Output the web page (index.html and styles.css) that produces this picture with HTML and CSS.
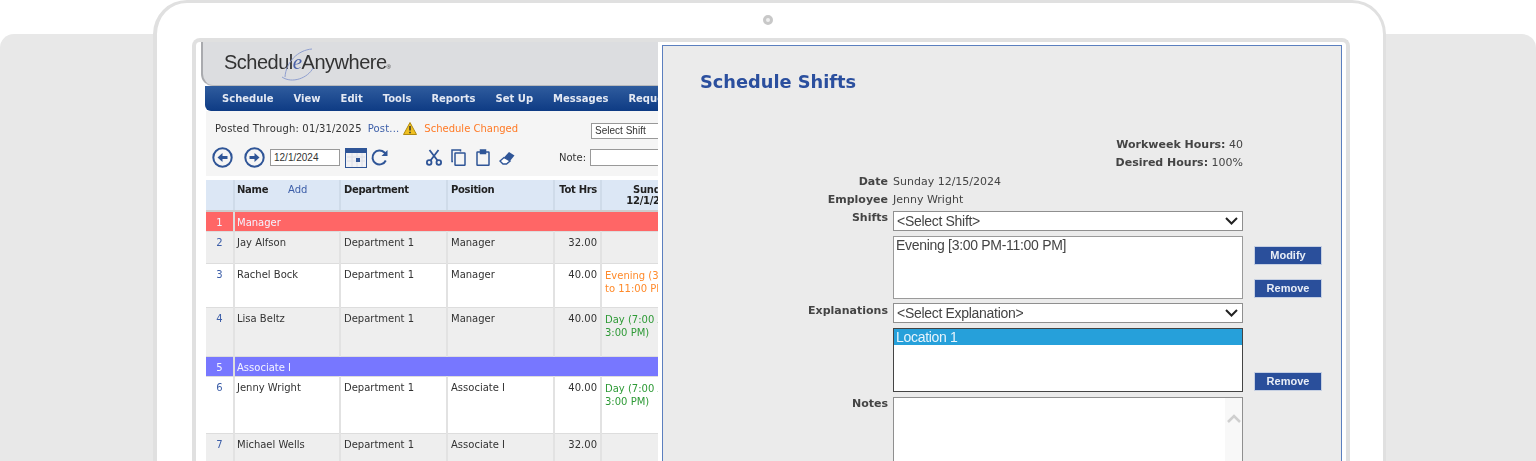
FILE: index.html
```html
<!DOCTYPE html>
<html lang="en">
<head>
    <meta charset="UTF-8">
    <meta name="viewport" content="width=device-width, initial-scale=1.0">
    <title>Schedule Shifts</title>
    <link rel="stylesheet" href="styles.css">
</head>
<body>
    <div class="stage">
        <div class="band"></div>
        <div class="laptop">
            <div class="camera-row"><span class="camera"></span></div>
            <div class="screen">
                <!-- Schedule behind the dialog -->
                <div class="app">
                    <div class="logo-bar">
                        <div class="logo">
                            <span>Schedul</span><em>e</em><span>Anywhere</span><sup>&reg;</sup>
                            <svg class="swoosh" width="36" height="36" viewBox="0 0 36 36" fill="none" stroke="#8f9fd0" stroke-width="1">
                                <path d="M32 1C18 2 6 14 5 29"/>
                                <path d="M2 29C12 36 28 30 33 20"/>
                            </svg>
                        </div>
                    </div>
                    <nav class="menu">
                        <span>Schedule</span>
                        <span>View</span>
                        <span>Edit</span>
                        <span>Tools</span>
                        <span>Reports</span>
                        <span>Set Up</span>
                        <span>Messages</span>
                        <span>Requests</span>
                    </nav>
                    <div class="toolbar">
                        <div class="tool-row first">
                            <span>Posted Through: 01/31/2025</span>
                            <a class="post-link">Post...</a>
                            <svg class="warn" width="14" height="13" viewBox="0 0 14 13">
                                <path d="M7 .5 13.500 12.500H.5Z" fill="#f0c020" stroke="#b08a10" stroke-linejoin="round"/>
                                <path d="M7 4v4.500M7 9.800v1.400" stroke="#333" stroke-width="1.500"/>
                            </svg>
                            <span class="changed">Schedule Changed</span>
                            <span class="shift-pick">Select Shift</span>
                        </div>
                        <div class="tool-row second">
                            <svg class="nav-btn" width="21" height="21" viewBox="0 0 21 21" fill="none" stroke="#2f5597">
                                <circle cx="10.500" cy="10.500" r="9.200" stroke-width="2"/>
                                <path d="M15.500 10.500H9" stroke-width="3"/>
                                <path d="M10.500 6 5.500 10.500 10.500 15Z" fill="#2f5597" stroke="none"/>
                            </svg>
                            <svg class="nav-btn next" width="21" height="21" viewBox="0 0 21 21" fill="none" stroke="#2f5597">
                                <circle cx="10.500" cy="10.500" r="9.200" stroke-width="2"/>
                                <path d="M5.500 10.500H12" stroke-width="3"/>
                                <path d="M10.500 6 15.500 10.500 10.500 15Z" fill="#2f5597" stroke="none"/>
                            </svg>
                            <span class="date-box">12/1/2024</span>
                            <svg class="cal" width="22" height="20" viewBox="0 0 22 20">
                                <rect x=".5" y=".5" width="21" height="19" fill="#f1f1f4" stroke="#2f5597"/>
                                <rect x="1" y="1" width="20" height="4" fill="#2f5597"/>
                                <path d="M2 9H20M2 13H20M7 5V19M12 5V19M17 5V19" stroke="#dcdfe8"/>
                                <rect x="11" y="10" width="4" height="4" fill="#2f5597"/>
                            </svg>
                            <svg class="refresh" width="18" height="18" viewBox="0 0 18 18" fill="none" stroke="#2f5597" stroke-width="2">
                                <path d="M14.800 11.500A7 7 0 1 1 13.500 3.500L15 5"/>
                                <path d="M16.500 1V7H10.500Z" fill="#2f5597" stroke="none"/>
                            </svg>
                            <svg class="scissors" width="16" height="17" viewBox="0 0 16 17" fill="none" stroke="#2f5597" stroke-width="1.800">
                                <circle cx="3.200" cy="13.500" r="2.300"/>
                                <circle cx="12.800" cy="13.500" r="2.300"/>
                                <path d="M4.500 11.500 12.500 1M11.500 11.500 3.500 1"/>
                            </svg>
                            <svg class="copy" width="15" height="17" viewBox="0 0 15 17" fill="none" stroke="#2f5597" stroke-width="1.500">
                                <path d="M2 12.500H1V1H9.500V2.500"/>
                                <rect x="4" y="4" width="10" height="12.200" rx=".5"/>
                            </svg>
                            <svg class="paste" width="14" height="17" viewBox="0 0 14 17" fill="none" stroke="#2f5597" stroke-width="1.500">
                                <rect x="1" y="3" width="12" height="13.200" rx=".5"/>
                                <rect x="4.500" y="1" width="5" height="3.500" fill="#2f5597"/>
                            </svg>
                            <svg class="eraser" width="16" height="14" viewBox="0 0 16 14">
                                <path d="M10 1 15.500 4.500 11 10 5 6.500Z" fill="#2f5597"/>
                                <path d="M5 6.500 11 10 7.500 13H4L1 10Z" fill="#fff" stroke="#2f5597" stroke-width="1.400"/>
                            </svg>
                            <span class="note-label">Note:</span>
                            <span class="note-box"></span>
                        </div>
                    </div>
                    <table class="grid">
                        <colgroup>
                            <col class="c-num"><col class="c-name"><col class="c-dept"><col class="c-pos"><col class="c-hrs"><col class="c-day">
                        </colgroup>
                        <thead>
                            <tr>
                                <th></th>
                                <th><span class="name-head">Name</span><a class="add-link">Add</a></th>
                                <th>Department</th>
                                <th>Position</th>
                                <th class="num">Tot Hrs</th>
                                <th class="day-head">Sunday<br>12/1/2024</th>
                            </tr>
                        </thead>
                        <tbody>
                            <tr class="group red"><td class="idx">1</td><td colspan="5">Manager</td></tr>
                            <tr class="odd h31"><td class="idx">2</td><td>Jay Alfson</td><td>Department 1</td><td>Manager</td><td class="num">32.00</td><td></td></tr>
                            <tr class="h44"><td class="idx">3</td><td>Rachel Bock</td><td>Department 1</td><td>Manager</td><td class="num">40.00</td><td class="evening">Evening (3:00 PM<br>to 11:00 PM)</td></tr>
                            <tr class="odd h48"><td class="idx">4</td><td>Lisa Beltz</td><td>Department 1</td><td>Manager</td><td class="num">40.00</td><td class="dayshift">Day (7:00 AM to<br>3:00 PM)</td></tr>
                            <tr class="group violet"><td class="idx">5</td><td colspan="5">Associate I</td></tr>
                            <tr class="h57"><td class="idx">6</td><td>Jenny Wright</td><td>Department 1</td><td>Associate I</td><td class="num">40.00</td><td class="dayshift">Day (7:00 AM to<br>3:00 PM)</td></tr>
                            <tr class="odd h48"><td class="idx">7</td><td>Michael Wells</td><td>Department 1</td><td>Associate I</td><td class="num">32.00</td><td></td></tr>
                        </tbody>
                    </table>
                </div>

                <!-- Schedule Shifts dialog -->
                <div class="dialog-wrap">
                    <div class="dialog">
                        <h2>Schedule Shifts</h2>
                        <div class="hours"><b>Workweek Hours:</b> 40</div>
                        <div class="hours"><b>Desired Hours:</b> 100%</div>
                        <div class="form">
                            <label class="r-date">Date</label>
                            <span class="value r-date">Sunday 12/15/2024</span>
                            <label class="r-emp">Employee</label>
                            <span class="value r-emp">Jenny Wright</span>

                            <label>Shifts</label>
                            <div class="select"><span>&lt;Select Shift&gt;</span><svg width="13" height="8" viewBox="0 0 13 8" fill="none" stroke="#222" stroke-width="2"><path d="M1 1 6.500 6.500 12 1"/></svg></div>
                            <span></span>

                            <span></span>
                            <div class="listbox tall">Evening [3:00 PM-11:00 PM]</div>
                            <div class="btns shift-btns"><button>Modify</button><button>Remove</button></div>

                            <label class="expl-label">Explanations</label>
                            <div class="select"><span>&lt;Select Explanation&gt;</span><svg width="13" height="8" viewBox="0 0 13 8" fill="none" stroke="#222" stroke-width="2"><path d="M1 1 6.500 6.500 12 1"/></svg></div>
                            <span></span>

                            <span></span>
                            <div class="listbox focused"><div class="picked">Location 1</div></div>
                            <div class="btns expl-btns"><button>Remove</button></div>

                            <label class="notes-label">Notes</label>
                            <div class="notes"><div class="scroll"><svg width="14" height="9" viewBox="0 0 14 9" fill="none" stroke="#cfcfcf" stroke-width="2.500"><path d="M1 8 7 2 13 8"/></svg></div></div>
                            <span></span>
                        </div>
                    </div>
                </div>
            </div>
        </div>
        <div class="bottom-shade"></div>
    </div>
</body>
</html>
```

FILE: styles.css
```css
* {
    box-sizing: border-box;
}
html, body {
    margin: 0;
    background: #fff;
}
.stage {
    display: grid;
    height: 461px;
    overflow: hidden;
    font-family: "DejaVu Sans", Verdana, sans-serif;
    font-size: 10px;
    color: #333;
}
.band, .laptop, .bottom-shade {
    grid-area: 1 / 1;
}
.band {
    margin-top: 34px;
    background: #e8e8e8;
    border-radius: 14px 14px 0 0;
}
.laptop {
    width: 1233px;
    height: 480px;
    margin-left: 153px;
    background: #fff;
    border: 3px solid #e0e0e0;
    border-left-width: 4px;
    border-radius: 34px 34px 0 0;
    overflow: hidden;
}
.camera-row {
    display: flex;
    justify-content: center;
    height: 35px;
    padding: 12px 4px 0 0;
}
.camera {
    width: 10px;
    height: 10px;
    border: 3px solid #c8c8c8;
    border-radius: 50%;
    background: #f0f0f0;
}
.screen {
    display: flex;
    width: 1158px;
    height: 440px;
    margin-left: 35px;
    background: #fff;
    border: 4px solid #e0e0e0;
    border-bottom: 0;
    border-radius: 8px 8px 0 0;
    overflow: hidden;
}
.bottom-shade {
    align-self: end;
    height: 8px;
    background: rgba(230, 230, 230, 0.55);
}

/* left side, the schedule */
.app {
    width: 462px;
    flex: none;
    overflow: hidden;
    filter: blur(0.35px);
}
.logo-bar {
    height: 44px;
    margin-left: 5px;
    padding: 8px 0 0 21px;
    background: #dcdde0;
    border-left: 2px solid #a9aaae;
    border-bottom: 1px solid #b9babd;
    border-radius: 0 0 0 12px;
}
.logo {
    display: flex;
    align-items: baseline;
    position: relative;
    width: 175px;
    font-family: "Liberation Sans", Arial, sans-serif;
    font-size: 20px;
    letter-spacing: -0.5px;
    color: #333;
}
.logo em {
    font-family: "Liberation Serif", serif;
    color: #4a62a8;
    font-size: 21px;
}
.logo sup {
    font-size: 6px;
    letter-spacing: 0;
}
.swoosh {
    position: absolute;
    left: 56px;
    top: -2px;
}
.menu {
    display: flex;
    gap: 20px;
    height: 25px;
    margin-left: 9px;
    padding: 7px 0 0 17px;
    white-space: nowrap;
    font-weight: bold;
    color: #e4e9f3;
    background: linear-gradient(#2f5c9e, #0e3b84);
    border-radius: 0 0 0 6px;
}
.toolbar {
    height: 65px;
    margin-left: 10px;
    background: #f5f5f5;
    white-space: nowrap;
}
.tool-row {
    display: flex;
    align-items: center;
}
.tool-row > * {
    flex: none;
}
.tool-row.first {
    height: 35px;
    padding-left: 9px;
    letter-spacing: 0.17px;
}
.post-link {
    margin-left: 6px;
    color: #3c5ea8;
}
.warn {
    margin-left: 4px;
}
.changed {
    margin-left: 7px;
    letter-spacing: 0;
    color: #ff7a26;
}
.shift-pick {
    width: 90px;
    height: 16px;
    margin: 4px 0 0 73px;
    padding: 1px 3px;
    font: 10px "Liberation Sans", Arial, sans-serif;
    letter-spacing: 0;
    background: #fff;
    border: 1px solid #999;
}
.tool-row.second {
    height: 23px;
    padding-left: 6px;
}
.nav-btn.next {
    margin-left: 11px;
}
.date-box {
    width: 70px;
    height: 17px;
    margin-left: 5px;
    padding: 2px 3px;
    font: 10px "Liberation Sans", Arial, sans-serif;
    background: #fff;
    border: 1px solid #999;
}
.cal {
    margin-left: 5px;
}
.refresh {
    margin-left: 4px;
}
.scissors {
    margin-left: 37px;
}
.copy {
    margin-left: 9px;
}
.paste {
    margin-left: 10px;
}
.eraser {
    margin-left: 9px;
}
.note-label {
    margin-left: 44px;
}
.note-box {
    width: 90px;
    height: 17px;
    margin-left: 4px;
    background: #fff;
    border: 1px solid #999;
}

/* grid */
.grid {
    width: 499px;
    margin: 4px 0 0 10px;
    table-layout: fixed;
    border-collapse: collapse;
    white-space: nowrap;
}
.c-num { width: 28px; }
.c-name { width: 106px; }
.c-dept { width: 107px; }
.c-pos { width: 107px; }
.c-hrs { width: 47px; }
.c-day { width: 104px; }
.grid th, .grid td {
    padding: 5px 3px 0;
    vertical-align: top;
    text-align: left;
    overflow: hidden;
    border-right: 2px solid #e2e2e2;
    border-bottom: 1px solid #ddd;
}
.grid th {
    height: 31px;
    padding-top: 4px;
    letter-spacing: -0.3px;
    color: #222;
    background: #dce7f5;
    border-right-color: #cfdbe9;
    border-bottom: 2px solid #ccc;
}
.grid td:nth-child(2), .grid th:nth-child(2) {
    padding-left: 2px;
}
.grid td:first-child {
    padding: 5px 0 0;
    text-align: center;
    color: #3c5ea8;
}
.grid .num {
    text-align: right;
}
.grid th.day-head {
    text-align: center;
}
.name-head {
    display: inline-block;
    width: 51px;
}
.add-link {
    font-weight: normal;
    letter-spacing: 0;
    color: #3c5ea8;
}
.odd td {
    background: #eee;
}
.h31 td { height: 32px; }
.h44 td { height: 44px; }
.h48 td { height: 49px; }
.h57 td { height: 57px; }
.group td, .grid .group td:first-child {
    height: 20px;
    color: #f4f4ff;
    padding-top: 5px;
    border-right-color: #ddd;
}
.group.red td {
    background: #ff6666;
}
.group.violet td {
    background: #7777ff;
}
.evening {
    color: #ff8a2a;
    line-height: 13px;
}
.dayshift {
    color: #2e9a36;
    line-height: 13px;
}

/* right side, the dialog */
.dialog-wrap {
    flex: 1;
    padding: 3px 4px 0;
}
.dialog {
    height: 440px;
    padding: 25px 0 0 37px;
    background: #ebebeb;
    border: 1px solid #5b7fbf;
    filter: blur(0.35px);
}
h2 {
    margin: 0 0 46px;
    font-size: 17.8px;
    color: #2b4f9e;
}
.hours {
    width: 543px;
    height: 18px;
    text-align: right;
    font-size: 11px;
    color: #444;
}
.form {
    display: grid;
    grid-template-columns: 188px 350px 68px;
    column-gap: 5px;
    margin-top: -1px;
    font-size: 11px;
    color: #444;
}
.form label {
    text-align: right;
    font-weight: bold;
}
.form .expl-label, .form .notes-label {
    padding-top: 1px;
}
.r-date {
    height: 18px;
    line-height: 18px;
}
.r-emp {
    height: 20px;
    line-height: 18px;
}
.value.r-date, .value.r-emp {
    grid-column: 2 / 4;
}
.form .btns {
    margin-left: 6px;
}
.select {
    display: flex;
    justify-content: space-between;
    align-items: center;
    height: 20px;
    padding: 0 4px 0 3px;
    font: 14px "Liberation Sans", Arial, sans-serif;
    letter-spacing: -0.3px;
    background: #fff;
    border: 1px solid #8f8f8f;
}
.listbox {
    margin: 5px 0 4px;
    padding: 0 2px;
    font: 14px/16px "Liberation Sans", Arial, sans-serif;
    letter-spacing: -0.3px;
    background: #fff;
    border: 1px solid #9a9a9a;
}
.listbox.tall {
    height: 63px;
}
.listbox.focused {
    height: 64px;
    padding: 0;
    margin-top: 5px;
    border-color: #444;
}
.picked {
    padding: 0 2px;
    color: #e8f4fc;
    background: #26a0da;
}
.notes {
    display: flex;
    justify-content: flex-end;
    height: 80px;
    margin-top: 1px;
    background: #fff;
    border: 1px solid #8f8f8f;
}
.scroll {
    width: 17px;
    padding-top: 15px;
    background: #f8f8f8;
    text-align: center;
}
.btns {
    display: flex;
    flex-direction: column;
    width: 68px;
}
.shift-btns {
    gap: 14px;
    padding-top: 15px;
}
.expl-btns {
    padding-top: 49px;
}
button {
    width: 68px;
    height: 19px;
    padding: 0 0 2px;
    font: bold 11px "Liberation Sans", Arial, sans-serif;
    color: #e8edf6;
    background: #2a4f9b;
    border: 1px solid #c5cfe2;
}
```
